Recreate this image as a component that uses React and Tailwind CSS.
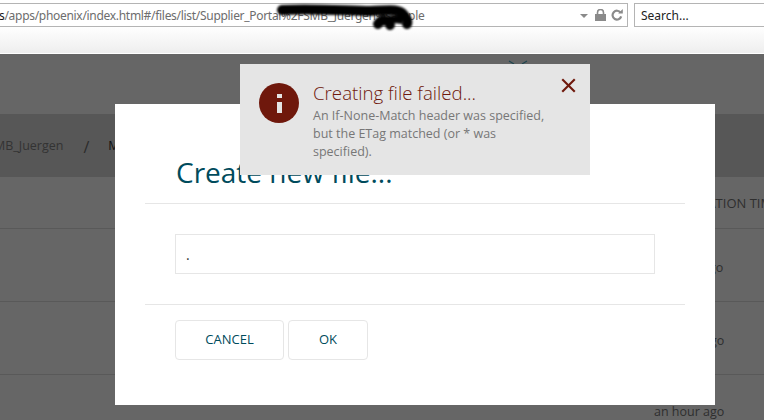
import React from "react";
import { X } from "lucide-react";

const row = "h-[73px] border-b border-[#595959] flex items-center pt-[6px] text-[12.5px] text-[#2e2e2e]";

export default function App() {
  return (
    <div className="relative w-[764px] h-[420px] overflow-hidden flex flex-col bg-[#666666] font-['Open_Sans',sans-serif]">
      {/* browser chrome */}
      <div className="h-[54px] shrink-0 border-b border-white bg-gradient-to-b from-white from-[50%] to-[#eeeeee] pt-[3px] flex gap-[6px] items-start font-['Noto_Sans',sans-serif]">
        <div className="relative w-[628px] h-[24px] border-y border-r border-[#b4b4b4] bg-white flex items-center pt-[1px] text-[12px] tracking-[-0.3px] text-[#6d6d6d] whitespace-nowrap">
          <span className="text-[#111] ml-[-1px]">s</span>
          <span>/apps/phoenix/index.html#/files/list/Supplier_Portal%2FSMB_Juergen%sample</span>
          <svg className="absolute left-[270px] top-[-4px] blur-[0.8px]" width="160" height="34" viewBox="0 0 160 34" fill="none">
            <path d="M12 10 C40 8 80 11 100 11 C115 11 128 8 133 14 C137 18 138 22 137 24" stroke="#000" strokeWidth="10" strokeLinecap="round" />
            <path d="M108 24 C112 19 118 19 120 25" stroke="#000" strokeWidth="10" strokeLinecap="round" />
            <path d="M110 16 L132 16 L132 24 L116 22 Z" fill="#000" />
          </svg>
          <div className="absolute left-[580px] top-0 h-full flex items-center text-[#8a8a8a]">
            <span className="w-0 h-0 border-x-[4px] border-x-transparent border-t-[4px] border-t-[#8a8a8a] mt-[2px]" />
            <svg className="ml-[7px]" width="11" height="12" viewBox="0 0 11 12">
              <path d="M2.5 5 V3.5 a3 3 0 0 1 6 0 V5" fill="none" stroke="#8a8a8a" strokeWidth="1.6" />
              <rect x="0" y="5" width="11" height="7" fill="#8a8a8a" />
            </svg>
            <svg className="ml-[5px]" width="12" height="12" viewBox="0 0 12 12" fill="none">
              <path d="M9.6 3.6 A4.4 4.4 0 1 0 10.2 7.4" stroke="#8a8a8a" strokeWidth="2.2" />
              <path d="M7.2 4.6 L11.8 4.6 L11.8 0 Z" fill="#8a8a8a" />
            </svg>
          </div>
        </div>
        <div className="flex-1 h-[24px] border-y border-l border-[#b4b4b4] bg-white flex items-center pl-[6px] pt-[1px] text-[12px] text-[#222]">Search...</div>
      </div>

      {/* dimmed page */}
      <div className="flex-1 flex flex-col">
        <div className="h-[60px] shrink-0" />
        <div className="h-[63px] shrink-0 bg-[#575757] flex items-center pt-[2px] text-[12.5px] text-[#2b2b2b] whitespace-nowrap">
          <span className="ml-[-6px] text-[#333333]">MB_Juergen</span>
          <span className="ml-[20px] text-[16px]">/</span>
          <span className="ml-[19px] text-[#111]">My</span>
        </div>
        <div className="h-[52px] shrink-0 border-b border-[#595959] flex items-center pt-[3px] pl-[654px] text-[13px] text-[#2e2e2e] whitespace-nowrap">MODIFICATION TIME</div>
        <div className={`${row} pl-[653px]`}>an hour ago</div>
        <div className={`${row} pl-[654px]`}>an hour ago</div>
        <div className="flex-1 flex items-end pl-[654px] text-[12.5px] text-[#2e2e2e] leading-[17px]">an hour ago</div>
      </div>

      {/* modal */}
      <div className="absolute left-[115px] top-[104px] w-[600px] h-[301px] bg-white flex flex-col items-stretch">
        <div className="h-[100px] mx-[30px] border-b border-[#e6e6e6] flex items-end pb-[12px] pl-[31px]">
          <h2 className="text-[28px] leading-[38px] text-[#004b5c]">Create new file...</h2>
        </div>
        <div className="h-[101px] mx-[30px] border-b border-[#e6e6e6] flex items-center px-[30px]">
          <div className="w-full h-[40px] border border-[#e6e6e6] flex items-center pl-[10px] pt-[1px] text-[14px] text-[#333]">.</div>
        </div>
        <div className="flex gap-[4px] pl-[60px] pt-[15px]">
          <button className="w-[109px] h-[40px] border border-[#e6e6e6] rounded-[4px] text-[13px] text-[#004b5c]">CANCEL</button>
          <button className="w-[80px] h-[40px] border border-[#e6e6e6] rounded-[4px] text-[13px] text-[#004b5c]">OK</button>
        </div>
      </div>

      {/* chevron peeking above the toast */}
      <svg className="absolute left-[508px] top-[60px]" width="20" height="5" viewBox="0 0 20 5" fill="none">
        <path d="M1 1 L6 4 M19 1 L14 4" stroke="#1f4650" strokeWidth="1.2" />
      </svg>

      {/* toast */}
      <div className="absolute left-[240px] top-[64px] w-[350px] h-[111px] bg-[#e5e5e5] flex">
        <div className="w-[40px] h-[40px] rounded-full bg-[#6f180c] ml-[19px] mt-[19px] shrink-0 flex flex-col items-center justify-center gap-[4px]">
          <span className="w-[5px] h-[4px] bg-[#e5e5e5]" />
          <span className="w-[5px] h-[11px] bg-[#e5e5e5]" />
        </div>
        <div className="ml-[14px] mt-[17px] w-[240px]">
          <div className="text-[18.7px] leading-[24px] font-light text-[#6f180c] whitespace-nowrap">Creating file failed...</div>
          <div className="text-[12.5px] leading-[18px] text-[#777777] mt-[2px]">
            <div className="whitespace-nowrap">An If-None-Match header was specified,</div>
            <div className="whitespace-nowrap">but the ETag matched (or * was</div>
            <div className="whitespace-nowrap">specified).</div>
          </div>
        </div>
        <X className="absolute left-[316px] top-[9px] text-[#6f180c]" size={25} strokeWidth={2} strokeLinecap="butt" />
      </div>
    </div>
  );
}
